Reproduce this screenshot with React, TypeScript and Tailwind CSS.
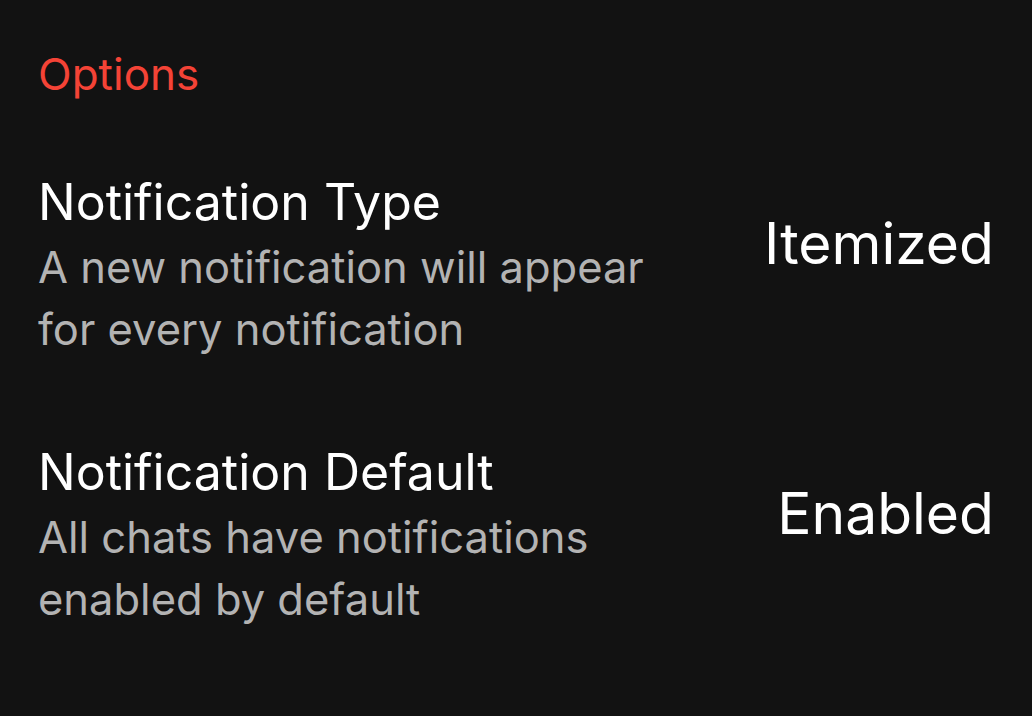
import React from 'react';

const rows = [
  {
    title: "Notification Type",
    desc: "A new notification will appear for every notification",
    value: "Itemized",
  },
  {
    title: "Notification Default",
    desc: "All chats have notifications enabled by default",
    value: "Enabled",
  },
];

const App = () => {
  return (
    <div
      className="w-[1032px] h-[716px] bg-[#121212] overflow-hidden pl-[38px] pr-[38px] pt-[48px]"
      style={{ fontFamily: "Inter, 'Noto Sans', sans-serif" }}
    >
      <h2 className="text-[#f44336] text-[44px] leading-[52px] font-normal">Options</h2>

      <div className="flex flex-col gap-[78px] mt-[68px]">
        {rows.map((r) => (
          <div key={r.title} className="flex items-start justify-between">
            <div className="w-[640px]">
              <div className="text-white text-[50px] leading-[68px]">{r.title}</div>
              <div className="text-[#b3b3b3] text-[43.5px] leading-[62px]">{r.desc}</div>
            </div>
            <div className="text-white text-[57px] leading-[64px] mt-[44px]">{r.value}</div>
          </div>
        ))}
      </div>
    </div>
  );
};

export default App;
